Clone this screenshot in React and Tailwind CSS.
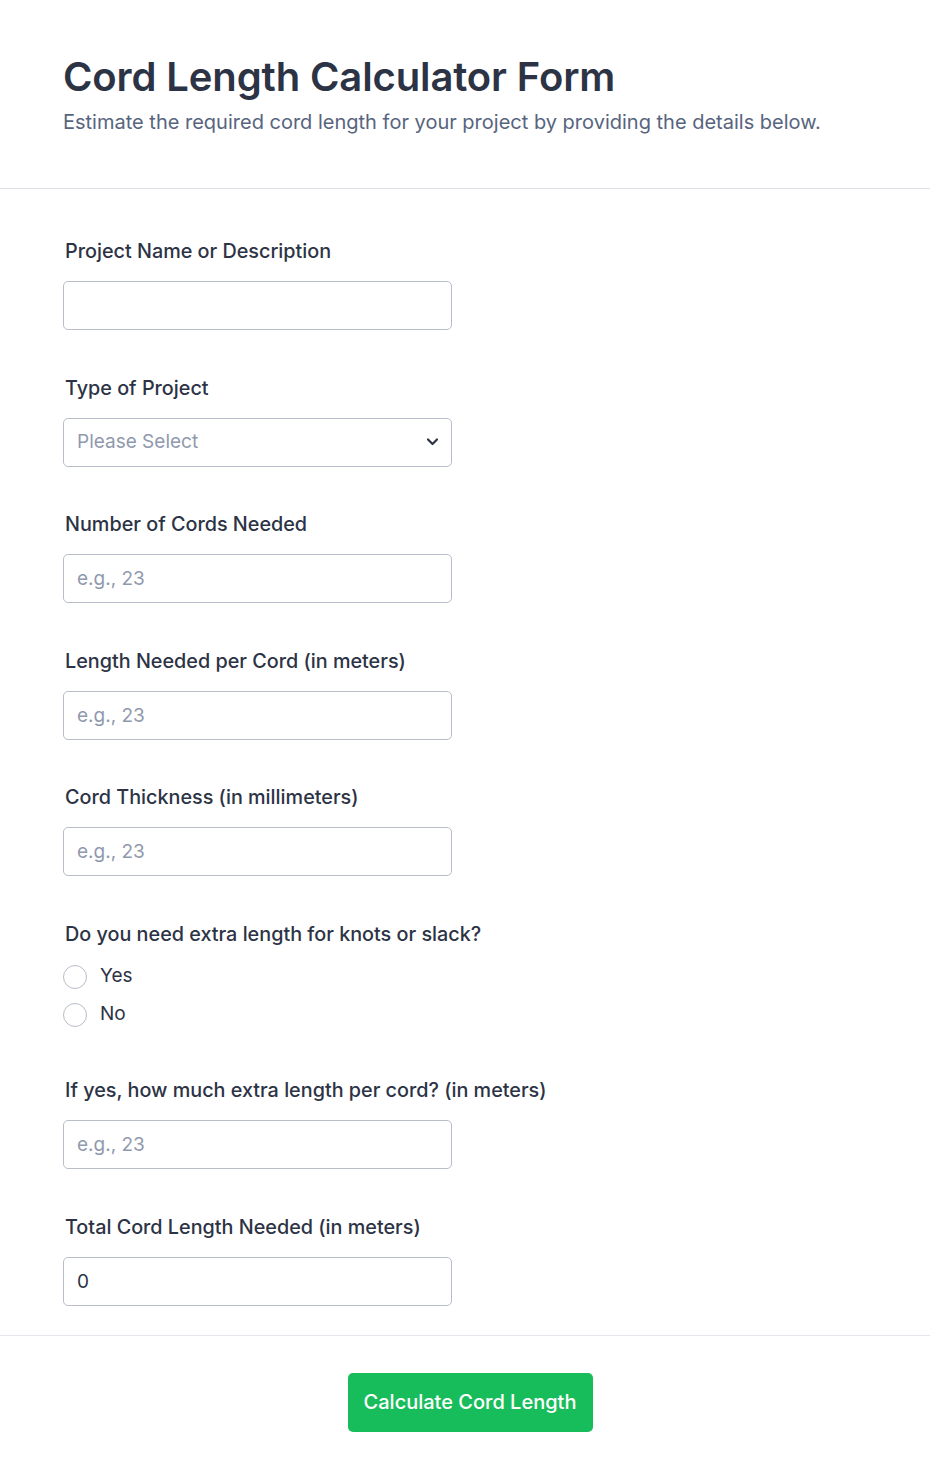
const font = { fontFamily: "Inter, 'Noto Sans', sans-serif" };

function Label({ children }) {
  return (
    <label className="block pl-[2px] text-[19.8px] font-medium leading-[28px] text-[#2c3345]">
      {children}
    </label>
  );
}

function TextField({ label, placeholder, value }) {
  return (
    <div>
      <Label>{label}</Label>
      <input
        type="text"
        placeholder={placeholder}
        defaultValue={value}
        className="mt-4 block h-[49px] w-[389px] rounded-[5px] border border-[#b8bdc9] bg-white px-[13px] text-[19px] text-[#2c3345] outline-none placeholder:text-[#8f99ad]"
      />
    </div>
  );
}

function Radio({ label }) {
  return (
    <label className="flex h-[24px] items-center gap-[13px]">
      <span className="h-[24px] w-[24px] rounded-full border border-[#b8bdc9] bg-white" />
      <span className="text-[19px] text-[#2c3345]">{label}</span>
    </label>
  );
}

export default function App() {
  return (
    <div className="min-h-[1482px] bg-white" style={font}>
      <div className="border-b border-[#dfe1e7] px-[63px] pt-[53px] pb-[52px]">
        <h1 className="text-[40px] font-semibold leading-[48px] tracking-[-0.12px] text-[#2c3345]">
          Cord Length Calculator Form
        </h1>
        <p className="mt-[7px] text-[20px] leading-[28px] text-[#57647e]">
          Estimate the required cord length for your project by providing the details below.
        </p>
      </div>

      <div className="flex flex-col gap-[43.5px] border-b border-[#e5e7ec] px-[63px] pt-[48px] pb-[29px]">
        <TextField label="Project Name or Description" />

        <div>
          <Label>Type of Project</Label>
          <div className="relative mt-4 w-[389px]">
            <select
              defaultValue=""
              className="block h-[49px] w-full appearance-none rounded-[5px] border border-[#b8bdc9] bg-white px-[13px] text-[19px] text-[#8f99ad] outline-none"
            >
              <option value="">Please Select</option>
              <option>Macrame</option>
              <option>Bracelet</option>
              <option>Other</option>
            </select>
            <svg
              className="pointer-events-none absolute right-[13px] top-[19px]"
              width="13"
              height="10"
              viewBox="0 0 13 10"
              fill="none"
            >
              <path d="M2 2.5l4.5 4.5 4.5-4.5" stroke="#2c3345" strokeWidth="2.2" strokeLinecap="round" strokeLinejoin="round" />
            </svg>
          </div>
        </div>

        <TextField label="Number of Cords Needed" placeholder="e.g., 23" />
        <TextField label="Length Needed per Cord (in meters)" placeholder="e.g., 23" />
        <TextField label="Cord Thickness (in millimeters)" placeholder="e.g., 23" />

        <div className="pb-[6px]">
          <Label>Do you need extra length for knots or slack?</Label>
          <div className="mt-[17px] flex flex-col gap-[14px]">
            <Radio label="Yes" />
            <Radio label="No" />
          </div>
        </div>

        <TextField label="If yes, how much extra length per cord? (in meters)" placeholder="e.g., 23" />
        <TextField label="Total Cord Length Needed (in meters)" value="0" />
      </div>

      <div className="flex justify-center pl-[10px] pt-[37px] pb-[50px]">
        <button className="h-[59px] w-[245px] rounded-[5px] bg-[#18bd5b] text-[20px] font-medium text-white">
          Calculate Cord Length
        </button>
      </div>
    </div>
  );
}
